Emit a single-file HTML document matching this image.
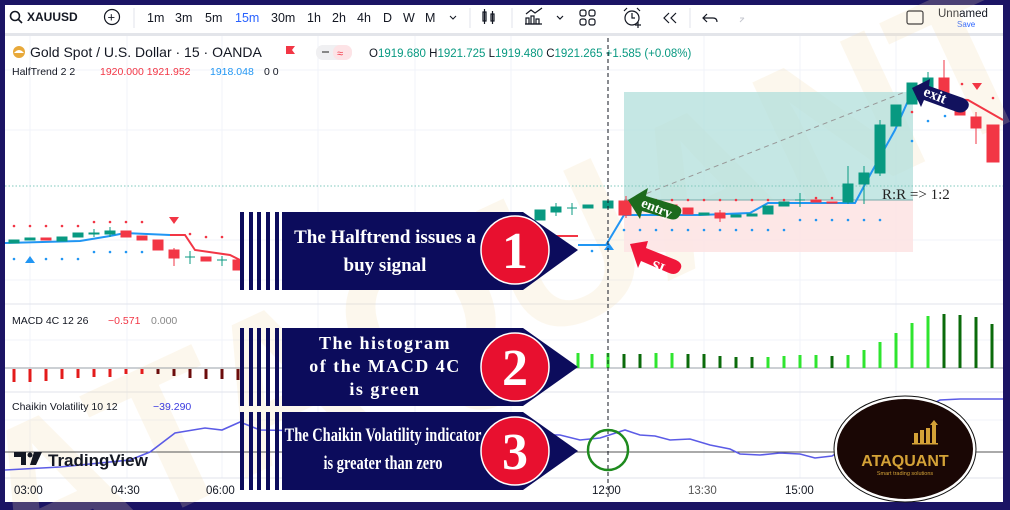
<!DOCTYPE html>
<html><head><meta charset="utf-8"><style>
html,body{margin:0;padding:0;background:#1b1464;width:1010px;height:510px;overflow:hidden;}
svg{display:block;font-family:"Liberation Sans",sans-serif;}
</style></head><body>
<svg width="1010" height="510" viewBox="0 0 1010 510" xmlns="http://www.w3.org/2000/svg">
<rect width="1010" height="510" fill="#1b1464"/>
<rect x="5" y="5" width="998" height="497" fill="#fff"/>
<!-- toolbar -->
<g font-size="12.5" fill="#131722">
<circle cx="15" cy="16" r="4.5" fill="none" stroke="#131722" stroke-width="1.6"/><line x1="18" y1="19" x2="22" y2="23" stroke="#131722" stroke-width="1.6"/>
<text x="27" y="21" font-weight="bold" font-size="12">XAUUSD</text>
<circle cx="112" cy="17" r="7.5" fill="none" stroke="#131722" stroke-width="1.2"/><text x="107.5" y="21.5" font-size="13">+</text>
<line x1="134" y1="8" x2="134" y2="28" stroke="#e0e3eb"/>
<text x="147" y="22">1m</text><text x="175" y="22">3m</text><text x="205" y="22">5m</text><text x="235" y="22" fill="#2962ff">15m</text><text x="271" y="22">30m</text><text x="307" y="22">1h</text><text x="332" y="22">2h</text><text x="357" y="22">4h</text><text x="383" y="22">D</text><text x="403" y="22">W</text><text x="425" y="22">M</text>
<path d="M450 16l3 3 3-3" fill="none" stroke="#131722"/>
<line x1="470" y1="8" x2="470" y2="28" stroke="#e0e3eb"/>
<g stroke="#131722" fill="none" stroke-width="1.2"><rect x="483" y="12" width="3" height="9"/><line x1="484.5" y1="9" x2="484.5" y2="24"/><rect x="491" y="14" width="3" height="7"/><line x1="492.5" y1="11" x2="492.5" y2="24"/></g>
<line x1="512" y1="8" x2="512" y2="28" stroke="#e0e3eb"/>
<g stroke="#131722" fill="none" stroke-width="1.2"><path d="M526 14l5-4 4 3 7-5"/><rect x="526" y="18" width="3" height="6"/><rect x="531" y="16" width="3" height="8"/><rect x="536" y="19" width="3" height="5"/><line x1="525" y1="24" x2="542" y2="24"/><path d="M557 16l3 3 3-3"/>
<rect x="580" y="10" width="6" height="6" rx="2"/><rect x="589" y="10" width="6" height="6" rx="2"/><rect x="580" y="19" width="6" height="6" rx="2"/><rect x="589" y="19" width="6" height="6" rx="2"/>
<circle cx="632" cy="18" r="7"/><path d="M632 13v5h3M624 11l3-3M640 11l-3-3"/><path d="M638 22v6M635 25h6"/>
<path d="M669 13l-5 5 5 5M676 13l-5 5 5 5"/>
<path d="M707 14l-4 4 4 4M703 18h10q4 0 4 4"/></g>
<path d="M740 22l4-4M744 18l-4 0" stroke="#c7c9d0" fill="none"/>
<line x1="690" y1="8" x2="690" y2="28" stroke="#e0e3eb"/>
<rect x="907" y="11" width="16" height="13" rx="2" fill="none" stroke="#131722" stroke-width="1.2"/>
<text x="938" y="17" font-size="11.5">Unnamed</text>
<text x="957" y="27" font-size="8" fill="#2962ff">Save</text>
</g>
<rect x="5" y="33" width="998" height="3" fill="#e3e5ea"/>
<!-- grid -->
<g stroke="#f0f3fa" stroke-width="1">
<line x1="30" y1="36" x2="30" y2="478"/><line x1="127" y1="36" x2="127" y2="478"/><line x1="222" y1="36" x2="222" y2="478"/><line x1="318" y1="36" x2="318" y2="478"/><line x1="415" y1="36" x2="415" y2="478"/><line x1="511" y1="36" x2="511" y2="478"/><line x1="704" y1="36" x2="704" y2="478"/><line x1="800" y1="36" x2="800" y2="478"/><line x1="896" y1="36" x2="896" y2="478"/>
<line x1="5" y1="70" x2="1003" y2="70"/><line x1="5" y1="130" x2="1003" y2="130"/><line x1="5" y1="240" x2="1003" y2="240"/><line x1="5" y1="280" x2="1003" y2="280"/><line x1="5" y1="340" x2="1003" y2="340"/><line x1="5" y1="420" x2="1003" y2="420"/>
</g>
<line x1="5" y1="304" x2="1003" y2="304" stroke="#e0e3eb"/>
<line x1="5" y1="392" x2="1003" y2="392" stroke="#e0e3eb"/>
<line x1="5" y1="478" x2="1003" y2="478" stroke="#e0e3eb"/>
<!-- watermark -->
<text x="505" y="350" text-anchor="middle" font-size="210" font-weight="bold" fill="#f6deb0" opacity="0.22" transform="rotate(-25 505 280)">ATAQUANT</text>
<!-- header text -->
<circle cx="19" cy="52" r="6" fill="#e8a93a"/><path d="M14 53q5-6 10 0z" fill="#fff"/>
<text x="30" y="57" font-size="14" fill="#131722">Gold Spot / U.S. Dollar · 15 · OANDA</text>
<path d="M286 46h9l-3 4 3 4h-9z" fill="#f23645"/>
<rect x="316" y="45" width="36" height="15" rx="7" fill="#f0f0f2"/><rect x="333" y="45" width="19" height="15" rx="7" fill="#fde3e6"/>
<line x1="322" y1="52" x2="329" y2="52" stroke="#888" stroke-width="2"/><text x="337" y="57" font-size="11" fill="#f23645">≈</text>
<text x="369" y="57" font-size="11.5" fill="#089981"><tspan fill="#131722">O</tspan>1919.680 <tspan fill="#131722">H</tspan>1921.725 <tspan fill="#131722">L</tspan>1919.480 <tspan fill="#131722">C</tspan>1921.265 +1.585 (+0.08%)</text>
<text x="12" y="75" font-size="10.5" fill="#131722">HalfTrend 2 2</text>
<text x="100" y="75" font-size="10.5" fill="#f23645">1920.000 1921.952</text>
<text x="210" y="75" font-size="10.5" fill="#2196f3">1918.048</text>
<text x="264" y="75" font-size="10.5" fill="#131722">0 0</text>
<!-- zones -->
<rect x="624" y="92" width="289" height="108" fill="#b2dfdb" opacity="0.75"/>
<rect x="624" y="200" width="289" height="52" fill="#fde4e4" opacity="0.9"/>
<line x1="5" y1="186" x2="1003" y2="186" stroke="#7fc8bd" stroke-dasharray="1.5 2"/>
<line x1="630" y1="200" x2="910" y2="90" stroke="#999" stroke-dasharray="5 4"/>
<line x1="624" y1="200" x2="913" y2="200" stroke="#7aa"/>
<text x="882" y="199" font-family="Liberation Serif,serif" font-size="15" fill="#222">R:R =&gt; 1:2</text>
<!-- halftrend lines -->
<polyline points="5,243 80,241 110,236 125,233 170,235" fill="none" stroke="#2196f3" stroke-width="2"/>
<polyline points="170,235 185,235 195,250 230,255 240,260" fill="none" stroke="#f23645" stroke-width="2"/>
<polyline points="545,236 578,236" fill="none" stroke="#f23645" stroke-width="2"/>
<polyline points="578,245 606,245 624,215 700,215 750,213 768,203 840,203 855,203 870,175 895,130 912,92 925,85" fill="none" stroke="#2196f3" stroke-width="2"/>
<polyline points="935,98 968,100 1003,120" fill="none" stroke="#f23645" stroke-width="2"/>
<!-- dots -->
<g fill="#f23645">
<circle cx="14" cy="226" r="1.3"/><circle cx="30" cy="226" r="1.3"/><circle cx="46" cy="226" r="1.3"/><circle cx="62" cy="226" r="1.3"/><circle cx="78" cy="226" r="1.3"/><circle cx="94" cy="222" r="1.3"/><circle cx="110" cy="222" r="1.3"/><circle cx="126" cy="222" r="1.3"/><circle cx="142" cy="222" r="1.3"/>
<path d="M169 217h10l-5 7z"/><circle cx="190" cy="234" r="1.3"/><circle cx="206" cy="237" r="1.3"/><circle cx="222" cy="237" r="1.3"/>
<circle cx="640" cy="200" r="1.3"/><circle cx="656" cy="200" r="1.3"/><circle cx="672" cy="200" r="1.3"/><circle cx="688" cy="200" r="1.3"/><circle cx="704" cy="200" r="1.3"/><circle cx="720" cy="200" r="1.3"/><circle cx="736" cy="200" r="1.3"/><circle cx="752" cy="200" r="1.3"/><circle cx="768" cy="200" r="1.3"/><circle cx="784" cy="200" r="1.3"/><circle cx="816" cy="198" r="1.3"/><circle cx="832" cy="198" r="1.3"/>
<circle cx="912" cy="112" r="1.3"/><circle cx="928" cy="98" r="1.3"/><circle cx="962" cy="84" r="1.3"/><circle cx="993" cy="98" r="1.3"/>
<path d="M972 83h10l-5 7z"/>
</g>
<g fill="#2196f3">
<circle cx="14" cy="259" r="1.3"/><circle cx="46" cy="259" r="1.3"/><circle cx="62" cy="259" r="1.3"/><circle cx="78" cy="259" r="1.3"/><circle cx="94" cy="252" r="1.3"/><circle cx="110" cy="252" r="1.3"/><circle cx="126" cy="252" r="1.3"/><circle cx="142" cy="252" r="1.3"/>
<path d="M25 263h10l-5-7z"/><path d="M604 250h10l-5-7z"/><circle cx="592" cy="251" r="1.3"/>
<circle cx="624" cy="230" r="1.3"/><circle cx="640" cy="230" r="1.3"/><circle cx="656" cy="230" r="1.3"/><circle cx="672" cy="230" r="1.3"/><circle cx="688" cy="230" r="1.3"/><circle cx="704" cy="230" r="1.3"/><circle cx="720" cy="230" r="1.3"/><circle cx="736" cy="230" r="1.3"/><circle cx="752" cy="230" r="1.3"/><circle cx="768" cy="230" r="1.3"/><circle cx="784" cy="230" r="1.3"/>
<circle cx="800" cy="220" r="1.3"/><circle cx="816" cy="220" r="1.3"/><circle cx="832" cy="220" r="1.3"/><circle cx="848" cy="220" r="1.3"/><circle cx="864" cy="220" r="1.3"/><circle cx="880" cy="220" r="1.3"/>
<circle cx="912" cy="141" r="1.3"/><circle cx="928" cy="121" r="1.3"/><circle cx="945" cy="116" r="1.3"/>
</g>
<!-- candles -->
<g stroke-width="1">
<g fill="#089981" stroke="#089981">
<rect x="9" y="240" width="10" height="3"/><rect x="25" y="238" width="10" height="2"/><rect x="57" y="237" width="10" height="4"/><rect x="73" y="233" width="10" height="4"/><line x1="94" y1="229" x2="94" y2="237"/><rect x="89" y="233" width="10" height="1"/><rect x="105" y="231" width="10" height="3"/><line x1="110" y1="227" x2="110" y2="237"/>
<line x1="190" y1="251" x2="190" y2="264"/><line x1="185" y1="257" x2="195" y2="257"/><line x1="222" y1="256" x2="222" y2="266"/><line x1="217" y1="260" x2="227" y2="260"/>
<rect x="535" y="210" width="10" height="10"/><line x1="556" y1="203" x2="556" y2="216"/><rect x="551" y="207" width="10" height="5"/><line x1="572" y1="203" x2="572" y2="215"/><line x1="567" y1="208" x2="577" y2="208"/><rect x="583" y="205" width="10" height="3"/><rect x="603" y="201" width="10" height="7"/>
<rect x="699" y="213" width="10" height="2"/><rect x="731" y="215" width="10" height="2"/><rect x="747" y="214" width="10" height="2"/><rect x="763" y="206" width="10" height="8"/><rect x="779" y="202" width="10" height="4"/><line x1="800" y1="193" x2="800" y2="207"/><line x1="795" y1="200" x2="805" y2="200"/>
<line x1="848" y1="166" x2="848" y2="204"/><rect x="843" y="184" width="10" height="18"/><line x1="864" y1="166" x2="864" y2="204"/><rect x="859" y="173" width="10" height="11"/><line x1="880" y1="120" x2="880" y2="176"/><rect x="875" y="125" width="10" height="48"/><rect x="891" y="105" width="10" height="21"/><rect x="907" y="83" width="10" height="21"/><line x1="928" y1="72" x2="928" y2="90"/><rect x="923" y="78" width="10" height="10"/>
</g>
<g fill="#f23645" stroke="#f23645">
<rect x="41" y="238" width="10" height="2"/><rect x="121" y="231" width="10" height="6"/><rect x="137" y="236" width="10" height="4"/><rect x="153" y="240" width="10" height="10"/><line x1="174" y1="248" x2="174" y2="266"/><rect x="169" y="250" width="10" height="8"/><rect x="201" y="257" width="10" height="4"/><rect x="233" y="260" width="8" height="10"/>
<line x1="626" y1="196" x2="626" y2="218"/><rect x="619" y="201" width="12" height="14"/><rect x="667" y="205" width="10" height="7"/><rect x="683" y="208" width="10" height="6"/><rect x="715" y="213" width="10" height="5"/><line x1="720" y1="210" x2="720" y2="222"/><rect x="811" y="200" width="10" height="2"/><rect x="827" y="202" width="10" height="1"/>
<line x1="944" y1="60" x2="944" y2="100"/><rect x="939" y="78" width="10" height="20"/><rect x="955" y="100" width="10" height="15"/><line x1="976" y1="112" x2="976" y2="144"/><rect x="971" y="117" width="10" height="11"/><rect x="987" y="125" width="12" height="37"/>
</g>
</g>
<!-- arrows -->
<g>
<path d="M628 200l20-12 -2 8 30 9q8 3 4 10 -3 6 -10 4l-28-8 -2 8z" fill="#1d6b1d"/>
<text x="640" y="212" font-family="Liberation Serif,serif" font-weight="bold" font-size="14" fill="#fff" transform="rotate(22 655 210)">entry</text>
<path d="M630 244l18-3 -2 7 30 12q8 4 4 10 -4 6 -11 3l-28-12 -3 7z" fill="#f0163a"/>
<text x="652" y="272" font-family="Liberation Serif,serif" font-weight="bold" font-size="14" fill="#fff" transform="rotate(22 660 266)">SL</text>
<path d="M912 88l18-9 -1 7 34 12q8 4 5 10 -4 6 -11 4l-33-12 -3 7z" fill="#12125e"/>
<text x="922" y="102" font-family="Liberation Serif,serif" font-weight="bold" font-size="15" fill="#fff" transform="rotate(22 940 100)">exit</text>
</g>
<!-- MACD -->
<text x="12" y="324" font-size="10.5" fill="#131722">MACD 4C 12 26</text>
<text x="108" y="324" font-size="10.5" fill="#f23645">−0.571</text><text x="151" y="324" font-size="10.5" fill="#888">0.000</text>
<line x1="5" y1="368" x2="1003" y2="368" stroke="#9aa0a8"/>
<g stroke-width="3">
<g stroke="#e31b1b"><line x1="14" y1="369" x2="14" y2="382"/><line x1="30" y1="369" x2="30" y2="382"/><line x1="46" y1="369" x2="46" y2="381"/><line x1="62" y1="369" x2="62" y2="379"/><line x1="78" y1="369" x2="78" y2="378"/><line x1="94" y1="369" x2="94" y2="377"/><line x1="110" y1="369" x2="110" y2="377"/><line x1="126" y1="369" x2="126" y2="374"/><line x1="142" y1="369" x2="142" y2="374"/></g>
<g stroke="#6b0c0c"><line x1="158" y1="369" x2="158" y2="374"/><line x1="174" y1="369" x2="174" y2="376"/><line x1="190" y1="369" x2="190" y2="378"/><line x1="206" y1="369" x2="206" y2="379"/><line x1="222" y1="369" x2="222" y2="379"/><line x1="238" y1="369" x2="238" y2="380"/></g>
<g stroke="#2fe52f"><line x1="578" y1="353" x2="578" y2="368"/><line x1="592" y1="354" x2="592" y2="368"/><line x1="608" y1="353" x2="608" y2="368"/><line x1="656" y1="353" x2="656" y2="368"/><line x1="672" y1="353" x2="672" y2="368"/><line x1="768" y1="357" x2="768" y2="368"/><line x1="784" y1="356" x2="784" y2="368"/><line x1="800" y1="355" x2="800" y2="368"/><line x1="816" y1="355" x2="816" y2="368"/><line x1="848" y1="355" x2="848" y2="368"/><line x1="864" y1="350" x2="864" y2="368"/><line x1="880" y1="342" x2="880" y2="368"/><line x1="896" y1="333" x2="896" y2="368"/><line x1="912" y1="323" x2="912" y2="368"/><line x1="928" y1="316" x2="928" y2="368"/></g>
<g stroke="#0b6b0b"><line x1="624" y1="354" x2="624" y2="368"/><line x1="640" y1="354" x2="640" y2="368"/><line x1="688" y1="354" x2="688" y2="368"/><line x1="704" y1="354" x2="704" y2="368"/><line x1="720" y1="356" x2="720" y2="368"/><line x1="736" y1="357" x2="736" y2="368"/><line x1="752" y1="357" x2="752" y2="368"/><line x1="832" y1="356" x2="832" y2="368"/><line x1="944" y1="314" x2="944" y2="368"/><line x1="960" y1="315" x2="960" y2="368"/><line x1="976" y1="317" x2="976" y2="368"/><line x1="992" y1="324" x2="992" y2="368"/></g>
</g>
<!-- Chaikin -->
<text x="12" y="410" font-size="10.5" fill="#131722">Chaikin Volatility 10 12</text>
<text x="153" y="410" font-size="10.5" fill="#3a3ae0">−39.290</text>
<line x1="5" y1="452" x2="1003" y2="452" stroke="#555"/>
<polyline points="5,470 60,467 130,460 150,452 175,433 205,428 222,430 240,422 260,430 560,435 580,440 600,438 625,430 640,435 655,436 670,440 690,439 710,445 730,449 740,454 760,455 780,453 800,454 815,458 832,456 850,445 870,430 900,420 940,400 960,399 1003,399" fill="none" stroke="#5b5be6" stroke-width="1.6"/>
<!-- TradingView logo -->
<path d="M14 452h12v13h-5v-8h-7z" fill="#131722"/><circle cx="30" cy="455" r="2.5" fill="#131722"/><path d="M34 452h8l-6 13h-6z" fill="#131722"/>
<text x="48" y="466" font-size="17" font-weight="bold" fill="#131722">TradingView</text>
<!-- time axis -->
<g font-size="11.5" fill="#131722">
<text x="14" y="494">03:00</text><text x="111" y="494">04:30</text><text x="206" y="494">06:00</text><text x="592" y="494">12:00</text><text x="688" y="494" fill="#555">13:30</text><text x="785" y="494">15:00</text>
</g>
<!-- dashed vertical -->
<line x1="608" y1="38" x2="608" y2="500" stroke="#131722" stroke-dasharray="4 3"/>
<circle cx="608" cy="450" r="20" fill="none" stroke="#1e8a1e" stroke-width="2.5"/>
<!-- banners -->
<g fill="#0c0c5c">
<g id="s1"><rect x="240" y="212" width="4" height="78"/><rect x="249" y="212" width="4" height="78"/><rect x="257" y="212" width="4" height="78"/><rect x="266" y="212" width="4" height="78"/><rect x="275" y="212" width="4" height="78"/></g>
<path d="M282 212h241l55 38 -55 40h-241z"/>
<use href="#s1" transform="translate(0,116)"/>
<path d="M282 328h241l55 39 -55 39h-241z"/>
<use href="#s1" transform="translate(0,200)"/>
<path d="M282 412h241l55 39 -55 39h-241z"/>
</g>
<g fill="#e8102f" stroke="#fff" stroke-width="1.5">
<circle cx="515" cy="250" r="34"/><circle cx="515" cy="367" r="34"/><circle cx="515" cy="451" r="34"/>
</g>
<g font-family="Liberation Serif,serif" font-weight="bold" fill="#fff" text-anchor="middle">
<text x="515" y="268" font-size="52">1</text><text x="515" y="385" font-size="52">2</text><text x="515" y="469" font-size="52">3</text>
<text x="385" y="243" font-size="19">The Halftrend issues a</text>
<text x="385" y="271" font-size="19">buy signal</text>
<text x="385" y="349" font-size="18" letter-spacing="1.5">The histogram</text>
<text x="385" y="372" font-size="18" letter-spacing="1.5">of the MACD 4C</text>
<text x="385" y="395" font-size="18" letter-spacing="1.5">is green</text>
<g transform="translate(383 0) scale(0.76 1)"><text x="0" y="441" font-size="19">The Chaikin Volatility indicator</text><text x="0" y="469" font-size="19">is greater than zero</text></g>
</g>
<!-- logo -->
<ellipse cx="905" cy="449" rx="71" ry="53" fill="#fff" stroke="#111" stroke-width="1"/>
<ellipse cx="905" cy="449" rx="68" ry="50" fill="#1a0705"/>
<g fill="#d4a237"><rect x="914" y="433" width="4" height="10"/><rect x="920" y="430" width="4" height="13"/><rect x="926" y="428" width="4" height="15"/><rect x="932" y="423" width="4" height="20"/><path d="M930 425l4-5 4 5z"/><rect x="912" y="443" width="26" height="1.5"/></g>
<text x="905" y="466" font-size="16" font-weight="bold" fill="#d4a237" text-anchor="middle">ATAQUANT</text>
<text x="905" y="475" font-size="5.5" fill="#d4a237" text-anchor="middle">Smart trading solutions</text>
</svg>
</body></html>
